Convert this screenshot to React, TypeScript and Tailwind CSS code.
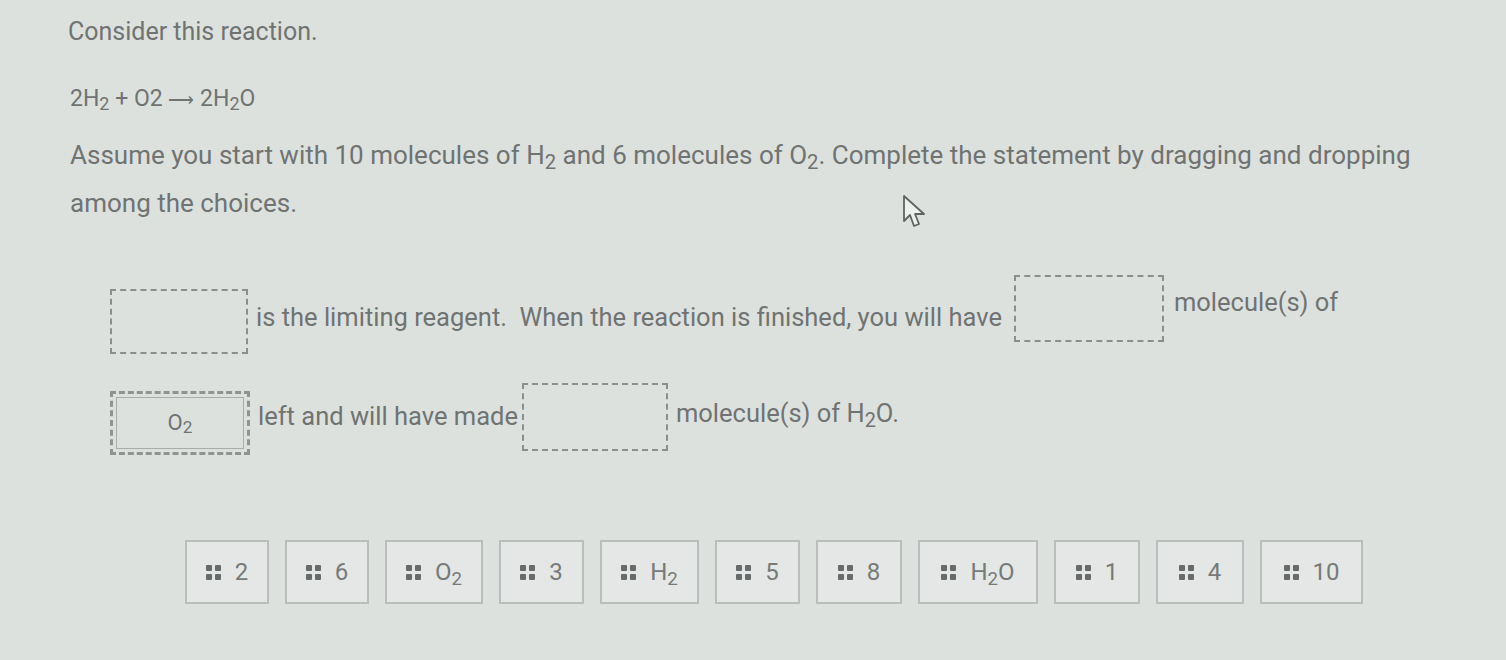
import type { ReactNode } from "react";

type Choice = { id: string; label: ReactNode; width: string };

function Sub({ children }: { children: ReactNode }) {
  return <sub className="text-[0.78em]">{children}</sub>;
}

const choices: Choice[] = [
  { id: "2", label: "2", width: "w-[84px]" },
  { id: "6", label: "6", width: "w-[84px]" },
  { id: "o2", label: <>O<Sub>2</Sub></>, width: "w-[98px]" },
  { id: "3", label: "3", width: "w-[85px]" },
  { id: "h2", label: <>H<Sub>2</Sub></>, width: "w-[99px]" },
  { id: "5", label: "5", width: "w-[85px]" },
  { id: "8", label: "8", width: "w-[86px]" },
  { id: "h2o", label: <>H<Sub>2</Sub>O</>, width: "w-[120px]" },
  { id: "1", label: "1", width: "w-[86px]" },
  { id: "4", label: "4", width: "w-[88px]" },
  { id: "10", label: "10", width: "w-[103px]" },
];

function GripDots() {
  return (
    <span className="grid grid-cols-2 gap-[3px]">
      <span className="h-[6px] w-[6px] rounded-[1px] bg-[#676b6b]" />
      <span className="h-[6px] w-[6px] rounded-[1px] bg-[#676b6b]" />
      <span className="h-[6px] w-[6px] rounded-[1px] bg-[#676b6b]" />
      <span className="h-[6px] w-[6px] rounded-[1px] bg-[#676b6b]" />
    </span>
  );
}

function DropZone({ className, children }: { className: string; children?: ReactNode }) {
  return (
    <div
      className={`flex shrink-0 items-center justify-center border-2 border-dashed border-[#8a8e8d] ${className}`}
    >
      {children}
    </div>
  );
}

function Cursor() {
  return (
    <svg
      className="absolute left-[902px] top-[194px]"
      width="28"
      height="36"
      viewBox="0 0 28 36"
      fill="none"
    >
      <path
        d="M2 2 L2 27 L8 21 L12 32 L17 30 L13 20 L22 20 Z"
        fill="#eef0ee"
        stroke="#5f6362"
        strokeWidth="1.8"
        strokeLinejoin="round"
      />
    </svg>
  );
}

export default function App() {
  return (
    <div className="relative h-[660px] w-[1506px] overflow-hidden bg-[#dde1de] font-['Roboto',sans-serif] text-[#6f7372]">
      <div className="px-[68px] pt-[15px]">
        <div className="text-[25px] leading-[34px]">Consider this reaction.</div>

        <div className="mt-[33px] pl-[2px] text-[23px] leading-[34px]">
          2H<Sub>2</Sub> + O2 <span className="text-[18px]">⟶</span> 2H<Sub>2</Sub>O
        </div>

        <div className="mt-[14px] max-w-[1380px] pl-[2px] text-[26px] leading-[48px]">
          Assume you start with 10 molecules of H<Sub>2</Sub> and 6 molecules of O<Sub>2</Sub>. Complete the
          statement by dragging and dropping among the choices.
        </div>

        {/* first sentence row */}
        <div className="mt-[48px] flex items-start pl-[42px] text-[25.5px] leading-[34px]">
          <DropZone className="mt-[14px] h-[65px] w-[138px]" />
          <span className="ml-[8px] mt-[25px]">
            is the limiting reagent.&nbsp; When the reaction is finished, you will have
          </span>
          <DropZone className="ml-[12px] h-[67px] w-[150px]" />
          <span className="ml-[10px] mt-[10px]">molecule(s) of</span>
        </div>

        {/* second sentence row */}
        <div className="mt-[29px] flex items-start pl-[42px] text-[25.5px] leading-[34px]">
          <DropZone className="mt-[8px] h-[64px] w-[140px] border-[3px] border-[#8f9392]">
            <div className="flex h-[52px] w-[128px] items-center justify-center border border-[#a8acab] text-[22px]">
              O<Sub>2</Sub>
            </div>
          </DropZone>
          <span className="ml-[8px] mt-[16px]">left and will have made</span>
          <DropZone className="ml-[4px] h-[68px] w-[146px]" />
          <span className="ml-[8px] mt-[13px]">
            molecule(s) of H<Sub>2</Sub>O.
          </span>
        </div>
      </div>

      <div className="mt-[85px] flex items-center gap-[16px] pl-[185px]">
        {choices.map((c) => (
          <div
            key={c.id}
            className={`flex h-[64px] ${c.width} items-center justify-center gap-[14px] border-2 border-[#b9bdbc] bg-[#e4e7e5] text-[24px] text-[#767a79]`}
          >
            <GripDots />
            <span>{c.label}</span>
          </div>
        ))}
      </div>

      <Cursor />
    </div>
  );
}
